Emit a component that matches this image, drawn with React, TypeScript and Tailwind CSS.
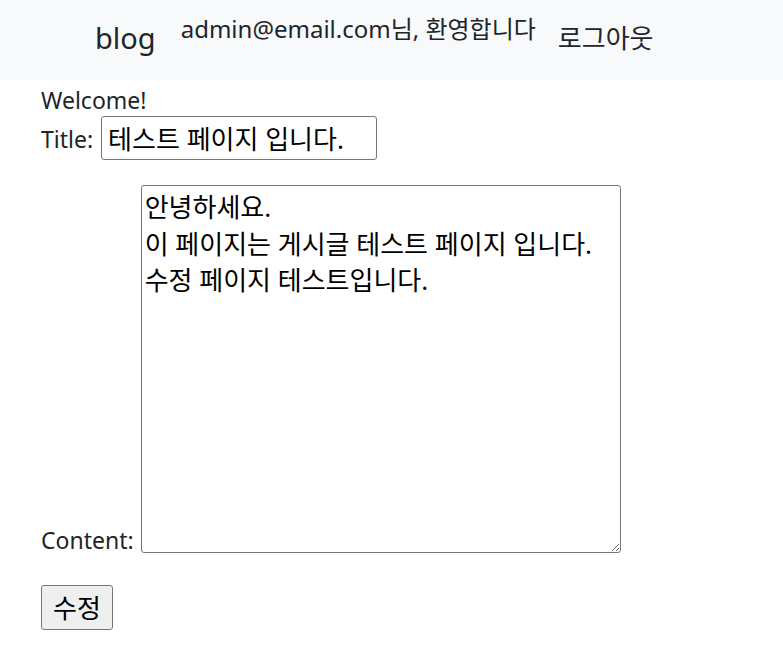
export default function App() {
  const font = { fontFamily: '"Noto Sans", "Noto Sans CJK KR", sans-serif' };
  return (
    <div className="min-h-screen bg-white text-[#212529]" style={font}>
      {/* Navbar */}
      <nav className="flex h-20 items-start bg-[#f8f9fa] pl-[95px]">
        <span className="mt-[18px] text-[29px] leading-[40px]">blog</span>
        <span className="ml-[25px] mt-[11px] text-[24px] leading-[36px]">admin@email.com님, 환영합니다</span>
        <span className="ml-[22px] mt-[20px] text-[26px] leading-[36px]">로그아웃</span>
      </nav>

      {/* Edit form */}
      <div className="px-[41px]">
        <p className="mt-[4px] text-[23px] leading-[32px]">Welcome!</p>
        <div className="flex items-center gap-[8px]">
          <label className="mt-[2px] text-[23px]">Title:</label>
          <input
            defaultValue="테스트 페이지 입니다."
            className="h-[44px] w-[276px] rounded-[3px] border border-[#767676] px-[6px] text-[26px] text-black outline-none"
          />
        </div>
        <div className="mt-[25px] flex items-end gap-[7px]">
          <label className="text-[23px] leading-[26px]">Content:</label>
          <textarea
            defaultValue={'안녕하세요.\n이 페이지는 게시글 테스트 페이지 입니다.\n수정 페이지 테스트입니다.'}
            className="h-[368px] w-[480px] rounded-[3px] border border-[#767676] px-[3px] pt-[3px] pb-0 text-[26px] leading-[36.5px] text-black outline-none"
          />
        </div>
        <button className="mt-[32px] h-[45px] w-[72px] rounded-[3px] border border-[#767676] bg-[#efefef] text-[26px] leading-none text-black">
          수정
        </button>
      </div>
    </div>
  );
}
